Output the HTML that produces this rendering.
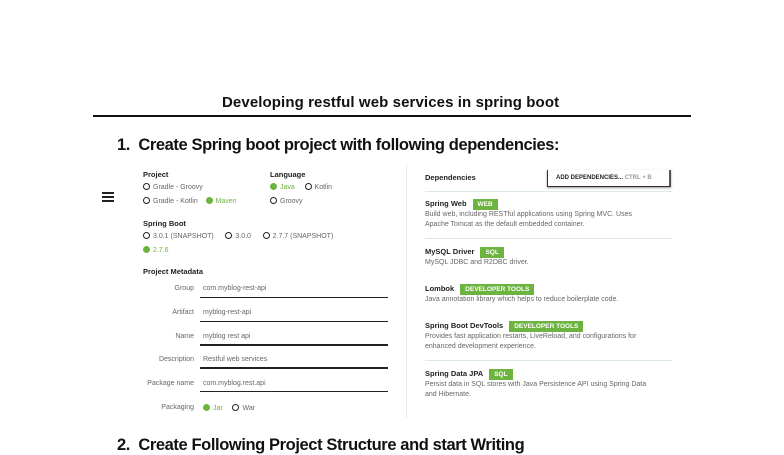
<!DOCTYPE html>
<html><head><meta charset="utf-8"><style>
*{margin:0;padding:0;box-sizing:border-box}
body{width:784px;height:441px;background:#fff;position:relative;overflow:hidden;font-family:"Liberation Sans",sans-serif}
.a{position:absolute;white-space:nowrap}
.t{font-size:7px;color:#666}
.b{font-size:7.5px;font-weight:bold;color:#222}
.g{color:#6db33f}
.r{display:inline-block;width:7px;height:7px;border:1.2px solid #222;border-radius:50%;vertical-align:-1px;margin-right:3px}
.rf{display:inline-block;width:7px;height:7px;background:#6db33f;border-radius:50%;vertical-align:-1px;margin-right:3px}
.tag{display:inline-block;background:#6db33f;color:#fff;font-size:6.5px;font-weight:bold;padding:2px 5px;margin-left:6px;vertical-align:0}
.lab{position:absolute;font-size:7px;color:#666;text-align:right;width:60px;left:134px}
.val{position:absolute;font-size:7px;color:#666;left:203px}
.ul{position:absolute;left:200px;width:188px;height:1px;background:#222}
.hr{position:absolute;left:425px;width:247px;height:1px;background:#dde8e8}
</style></head><body>
<div class="a" style="left:222px;top:94px;font-size:15px;font-weight:bold;letter-spacing:0.1px;color:#111">Developing restful web services in spring boot</div>
<div style="position:absolute;left:93px;top:115px;width:598px;height:2px;background:#111"></div>
<div class="a" style="left:117px;top:136px;font-size:16.5px;font-weight:bold;letter-spacing:-0.4px;color:#111">1.&nbsp; Create Spring boot project with following dependencies:</div>

<div style="position:absolute;left:102px;top:192px;width:12px;height:2px;background:#222;box-shadow:0 4px 0 #222,0 8px 0 #222"></div>

<div class="a b" style="left:143px;top:170px">Project</div>
<div class="a t" style="left:143px;top:183px"><span class="r"></span>Gradle - Groovy</div>
<div class="a t" style="left:143px;top:197px"><span class="r"></span>Gradle - Kotlin &nbsp;&nbsp;&nbsp;<span class="rf"></span><span class="g">Maven</span></div>
<div class="a b" style="left:270px;top:170px">Language</div>
<div class="a t" style="left:270px;top:183px"><span class="rf"></span><span class="g">Java</span> &nbsp;&nbsp;&nbsp;&nbsp;<span class="r"></span>Kotlin</div>
<div class="a t" style="left:270px;top:197px"><span class="r"></span>Groovy</div>
<div class="a b" style="left:143px;top:219px">Spring Boot</div>
<div class="a t" style="left:143px;top:232px"><span class="r"></span>3.0.1 (SNAPSHOT) &nbsp;&nbsp;&nbsp;&nbsp;&nbsp;<span class="r"></span>3.0.0 &nbsp;&nbsp;&nbsp;&nbsp;&nbsp;<span class="r"></span>2.7.7 (SNAPSHOT)</div>
<div class="a t" style="left:143px;top:246px"><span class="rf"></span><span class="g">2.7.6</span></div>
<div class="a b" style="left:143px;top:267px">Project Metadata</div>

<div class="lab" style="top:285px">Group</div><div class="val" style="top:285px">com.myblog-rest-api</div><div class="ul" style="top:297px"></div>
<div class="lab" style="top:309px">Artifact</div><div class="val" style="top:309px">myblog-rest-api</div><div class="ul" style="top:321px"></div>
<div class="lab" style="top:333px">Name</div><div class="val" style="top:333px">myblog rest api</div><div class="ul" style="top:344px;height:2px"></div>
<div class="lab" style="top:356px">Description</div><div class="val" style="top:356px">Restful web services</div><div class="ul" style="top:367px;height:2px"></div>
<div class="lab" style="top:380px">Package name</div><div class="val" style="top:380px">com.myblog.rest.api</div><div class="ul" style="top:391px"></div>
<div class="lab" style="top:404px">Packaging</div>
<div class="a t" style="left:203px;top:404px"><span class="rf"></span><span class="g">Jar</span> &nbsp;&nbsp;&nbsp;&nbsp;<span class="r"></span>War</div>

<div style="position:absolute;left:406px;top:165px;width:1px;height:253px;background:#e2eaea"></div>

<div class="a b" style="left:425px;top:173px">Dependencies</div>
<div style="position:absolute;left:547px;top:170px;width:124px;height:17px;border:1px solid #333;border-top:none;border-right:2px solid #555;box-shadow:0 1px 2px #999"></div>
<div class="a" style="left:556px;top:175px;font-size:6px;font-weight:bold;color:#222">ADD DEPENDENCIES... <span style="color:#999">CTRL + B</span></div>
<div class="hr" style="top:191px"></div>

<div class="a b" style="left:425px;top:199px">Spring Web<span class="tag">WEB</span></div>
<div class="a t" style="left:425px;top:211px">Build web, including RESTful applications using Spring MVC. Uses</div>
<div class="a t" style="left:425px;top:221px">Apache Tomcat as the default embedded container.</div>
<div class="hr" style="top:238px"></div>
<div class="a b" style="left:425px;top:247px">MySQL Driver<span class="tag">SQL</span></div>
<div class="a t" style="left:425px;top:259px">MySQL JDBC and R2DBC driver.</div>
<div class="a b" style="left:425px;top:284px">Lombok<span class="tag">DEVELOPER TOOLS</span></div>
<div class="a t" style="left:425px;top:296px">Java annotation library which helps to reduce boilerplate code.</div>
<div class="a b" style="left:425px;top:321px">Spring Boot DevTools<span class="tag">DEVELOPER TOOLS</span></div>
<div class="a t" style="left:425px;top:333px">Provides fast application restarts, LiveReload, and configurations for</div>
<div class="a t" style="left:425px;top:343px">enhanced development experience.</div>
<div class="hr" style="top:360px"></div>
<div class="a b" style="left:425px;top:369px">Spring Data JPA<span class="tag">SQL</span></div>
<div class="a t" style="left:425px;top:381px">Persist data in SQL stores with Java Persistence API using Spring Data</div>
<div class="a t" style="left:425px;top:391px">and Hibernate.</div>

<div class="a" style="left:117px;top:436px;font-size:16.5px;font-weight:bold;letter-spacing:-0.4px;color:#111">2.&nbsp; Create Following Project Structure and start Writing</div>
</body></html>
